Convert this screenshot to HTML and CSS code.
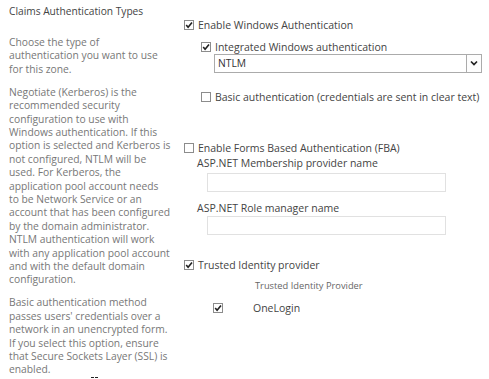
FILE: index.html
```html
<!DOCTYPE html>
<html>
<head>
<meta charset="utf-8">
<link rel="stylesheet" href="styles.css">
</head>
<body>
<div class="page">
  <div class="side">
    <div class="title">Claims Authentication Types</div>
    <p class="desc first">Choose the type of<br>authentication you want to use<br>for this zone.</p>
    <p class="desc">Negotiate (Kerberos) is the<br>recommended security<br>configuration to use with<br>Windows authentication. If this<br>option is selected and Kerberos is<br>not configured, NTLM will be<br>used. For Kerberos, the<br>application pool account needs<br>to be Network Service or an<br>account that has been configured<br>by the domain administrator.<br>NTLM authentication will work<br>with any application pool account<br>and with the default domain<br>configuration.</p>
    <p class="desc">Basic authentication method<br>passes users' credentials over a<br>network in an unencrypted form.<br>If you select this option, ensure<br>that Secure Sockets Layer (SSL) is<br>enabled.</p>
    <div class="dashes"><span></span><span></span></div>
  </div>
  <div class="main">
    <label class="row r-win">
      <svg class="cb" viewBox="0 0 10 10"><rect x="0.5" y="0.5" width="9" height="9"/><path d="M2.2 5 L4.1 7.3 L8 2.4"/></svg>
      <span>Enable Windows Authentication</span>
    </label>
    <label class="row sub r-int">
      <svg class="cb" viewBox="0 0 10 10"><rect x="0.5" y="0.5" width="9" height="9"/><path d="M2.2 5 L4.1 7.3 L8 2.4"/></svg>
      <span>Integrated Windows authentication</span>
    </label>
    <div class="select">
      <span class="sel-text">NTLM</span>
      <span class="sel-btn"><svg viewBox="0 0 10 10"><path d="M2 3.5 L5 6.5 L8 3.5"/></svg></span>
    </div>
    <label class="row sub r-basic">
      <svg class="cb" viewBox="0 0 10 10"><rect x="0.5" y="0.5" width="9" height="9"/></svg>
      <span>Basic authentication (credentials are sent in clear text)</span>
    </label>
    <label class="row r-fba">
      <svg class="cb" viewBox="0 0 10 10"><rect x="0.5" y="0.5" width="9" height="9"/></svg>
      <span>Enable Forms Based Authentication (FBA)</span>
    </label>
    <div class="field-label r-mem">ASP.NET Membership provider name</div>
    <div class="text-input"></div>
    <div class="field-label r-role">ASP.NET Role manager name</div>
    <div class="text-input"></div>
    <label class="row r-trust">
      <svg class="cb" viewBox="0 0 10 10"><rect x="0.5" y="0.5" width="9" height="9"/><path d="M2.2 5 L4.1 7.3 L8 2.4"/></svg>
      <span>Trusted Identity provider</span>
    </label>
    <div class="tip-head">Trusted Identity Provider</div>
    <div class="tip-row">
      <svg class="cb small" viewBox="0 0 10 10"><rect x="0.5" y="0.5" width="9" height="9"/><path d="M2.2 5 L4.1 7.3 L8 2.4"/></svg>
      <span class="tip-name">OneLogin</span>
    </div>
  </div>
</div>
</body>
</html>
```
FILE: styles.css
```css
html, body {
  margin: 0;
  padding: 0;
  background: #fff;
}
body {
  font-family: "Open Sans", "Noto Sans", sans-serif;
  color: #444;
}
.page {
  display: flex;
  width: 489px;
  height: 379px;
  overflow: hidden;
}
.side {
  width: 172px;
  padding-left: 9px;
  padding-top: 4px;
  flex: none;
  margin-right: 3px;
}
.title {
  font-size: 10.2px;
  line-height: 15px;
  color: #444;
  white-space: nowrap;
}
.desc {
  font-size: 10.3px;
  line-height: 13.4px;
  color: #777;
  margin: 9.5px 0 0 0;
  white-space: nowrap;
}
.desc.first {
  margin-top: 17px;
}
.dashes {
  display: flex;
  gap: 1px;
  margin-left: 82px;
  margin-top: 0;
}
.dashes span {
  width: 3px;
  height: 1px;
  background: #222;
}
.main {
  flex: 1;
  padding-top: 18px;
  font-size: 10.5px;
  color: #444;
}
.row {
  display: flex;
  align-items: center;
  height: 14px;
  line-height: 14px;
  gap: 4px;
  white-space: nowrap;
}
.cb {
  width: 10px;
  height: 10px;
  flex: none;
}
.cb rect {
  fill: #fff;
  stroke: #8c8c8c;
  stroke-width: 1;
}
.cb path {
  fill: none;
  stroke: #222;
  stroke-width: 1.6;
}
.sub {
  margin-left: 17px;
}
.r-int { margin-top: 7.5px; }
.select {
  margin-left: 30px;
  margin-top: 0;
  width: 268px;
  height: 19px;
  box-sizing: border-box;
  border: 1px solid #ababab;
  display: flex;
  align-items: center;
  justify-content: space-between;
}
.sel-text {
  padding-left: 3px;
  font-size: 10.3px;
  color: #333;
}
.sel-btn {
  width: 15px;
  height: 17px;
  box-sizing: border-box;
  border-left: 1px solid #ababab;
  display: flex;
  align-items: center;
  justify-content: center;
  background: #fdfdfd;
}
.sel-btn svg {
  width: 10px;
  height: 10px;
}
.sel-btn path {
  fill: none;
  stroke: #222;
  stroke-width: 1.7;
}
.r-basic { margin-top: 17.5px; }
.r-fba { margin-top: 37px; }
.field-label {
  margin-left: 13px;
  height: 14px;
  line-height: 14px;
  white-space: nowrap;
}
.r-mem { margin-top: 1px; }
.r-role { margin-top: 9px; }
.text-input {
  margin-left: 23px;
  margin-top: 3px;
  width: 239px;
  height: 19px;
  box-sizing: border-box;
  border: 1px solid #e1e1e1;
  background: #fff;
}
.r-role + .text-input { margin-top: 0.5px; }
.r-trust { margin-top: 23px; }
.tip-head {
  margin-top: 7.5px;
  margin-left: 71px;
  height: 14px;
  line-height: 14px;
  font-size: 9.3px;
  color: #666;
}
.tip-row {
  margin-top: 8px;
  margin-left: 29px;
  display: flex;
  align-items: center;
  height: 14px;
  gap: 30px;
}
.tip-name {
  font-size: 10.5px;
  color: #444;
}
```
